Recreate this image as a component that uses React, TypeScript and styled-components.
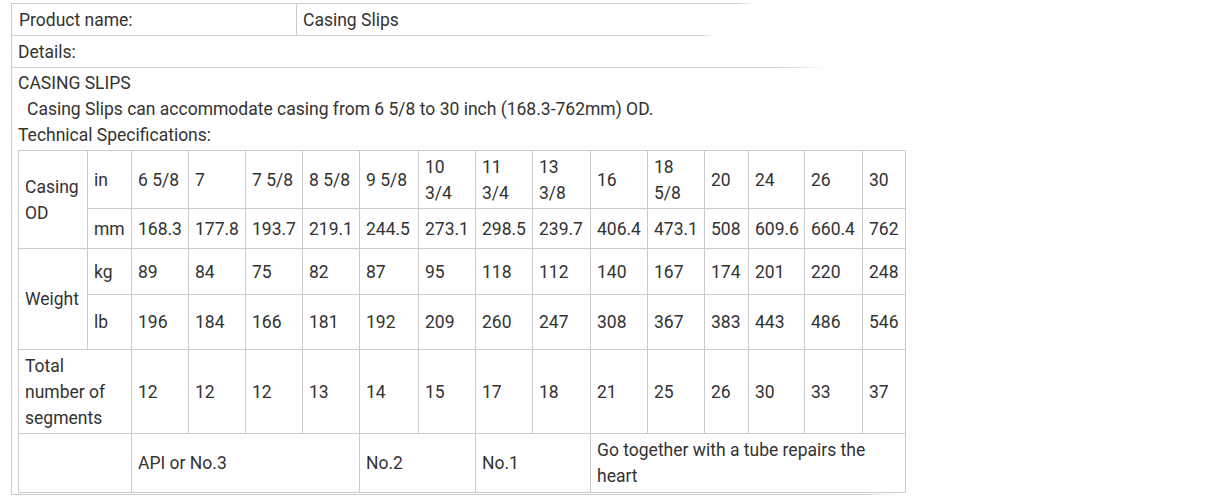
import React from "react";
import styled, { createGlobalStyle } from "styled-components";

const Global = createGlobalStyle`
  html, body { margin: 0; padding: 0; background: #fff; }
  body {
    font-family: Roboto, "Liberation Sans", Arial, sans-serif;
    font-size: 17.5px;
    color: #333;
  }
`;

const LINE = "#cccccc";

const Page = styled.div`
  padding: 3px 0 0 11px;
`;

const Frame = styled.div`
  display: flex;
  flex-direction: column;
  width: 900px;
  border-left: 1px solid ${LINE};
`;

const Rule = styled.div<{ $w: number; $fade?: number }>`
  height: 1px;
  width: ${(p) => p.$w}px;
  background: linear-gradient(
    to right,
    ${LINE} 0,
    ${LINE} calc(100% - ${(p) => p.$fade ?? 30}px),
    rgba(204, 204, 204, 0) 100%
  );
`;

const InfoRow = styled.div<{ $split?: boolean }>`
  display: grid;
  grid-template-columns: ${(p) => (p.$split ? "285px 1fr" : "1fr")};
  height: 31px;
`;

const InfoCell = styled.div<{ $divider?: boolean }>`
  display: flex;
  align-items: center;
  padding-left: ${(p) => (p.$divider ? 7 : 6)}px;
  border-right: ${(p) => (p.$divider ? `1px solid ${LINE}` : "none")};
  line-height: 20px;
  white-space: nowrap;
`;

const Content = styled.div`
  padding: 2px 0 1px 6px;
  display: flex;
  flex-direction: column;
`;

const TextLine = styled.div<{ $indent?: boolean }>`
  line-height: 26px;
  padding-left: ${(p) => (p.$indent ? 9 : 0)}px;
  white-space: nowrap;
`;

const SpecGrid = styled.div`
  margin-top: 2px;
  display: grid;
  grid-template-columns: 68px 43px 56px 56px 56px 56px 58px 56px 56px 57px 56px 56px 43px 55px 57px 42px;
  grid-template-rows: 57px 39px 45px 54px 83px 58px;
  gap: 1px;
  padding: 1px;
  background: ${LINE};
  width: max-content;
`;

const Cell = styled.div<{ $col?: string; $row?: string }>`
  background: #fff;
  display: flex;
  align-items: center;
  padding: 0 3px 0 6px;
  line-height: 26px;
  grid-column: ${(p) => p.$col ?? "auto"};
  grid-row: ${(p) => p.$row ?? "auto"};
`;

const inches = ["6 5/8", "7", "7 5/8", "8 5/8", "9 5/8", "10 3/4", "11 3/4", "13 3/8", "16", "18 5/8", "20", "24", "26", "30"];
const mm = ["168.3", "177.8", "193.7", "219.1", "244.5", "273.1", "298.5", "239.7", "406.4", "473.1", "508", "609.6", "660.4", "762"];
const kg = ["89", "84", "75", "82", "87", "95", "118", "112", "140", "167", "174", "201", "220", "248"];
const lb = ["196", "184", "166", "181", "192", "209", "260", "247", "308", "367", "383", "443", "486", "546"];
const segments = ["12", "12", "12", "13", "14", "15", "17", "18", "21", "25", "26", "30", "33", "37"];

const groups = [
  { label: "API or No.3", col: "3 / 7" },
  { label: "No.2", col: "7 / 9" },
  { label: "No.1", col: "9 / 11" },
  { label: "Go together with a tube repairs the heart", col: "11 / 17" },
];

export default function App() {
  return (
    <>
      <Global />
      <Page>
        <Frame>
          <Rule $w={743} $fade={20} />
          <InfoRow $split>
            <InfoCell $divider>Product name:</InfoCell>
            <InfoCell>Casing Slips</InfoCell>
          </InfoRow>
          <Rule $w={703} $fade={14} />
          <InfoRow>
            <InfoCell>Details:</InfoCell>
          </InfoRow>
          <Rule $w={818} $fade={60} />
          <Content>
            <TextLine>CASING SLIPS</TextLine>
            <TextLine $indent>
              Casing Slips can accommodate casing from 6 5/8 to 30 inch (168.3-762mm) OD.
            </TextLine>
            <TextLine>Technical Specifications:</TextLine>
            <SpecGrid>
              <Cell $col="1" $row="1 / 3">Casing OD</Cell>
              <Cell $col="2" $row="1">in</Cell>
              {inches.map((v, i) => (
                <Cell key={"in" + i} $row="1">{v}</Cell>
              ))}
              <Cell $col="2" $row="2">mm</Cell>
              {mm.map((v, i) => (
                <Cell key={"mm" + i} $row="2">{v}</Cell>
              ))}
              <Cell $col="1" $row="3 / 5">Weight</Cell>
              <Cell $col="2" $row="3">kg</Cell>
              {kg.map((v, i) => (
                <Cell key={"kg" + i} $row="3">{v}</Cell>
              ))}
              <Cell $col="2" $row="4">lb</Cell>
              {lb.map((v, i) => (
                <Cell key={"lb" + i} $row="4">{v}</Cell>
              ))}
              <Cell $col="1 / 3" $row="5">Total number of segments</Cell>
              {segments.map((v, i) => (
                <Cell key={"sg" + i} $row="5">{v}</Cell>
              ))}
              <Cell $col="1 / 3" $row="6" />
              {groups.map((g) => (
                <Cell key={g.label} $col={g.col} $row="6">{g.label}</Cell>
              ))}
            </SpecGrid>
          </Content>
          <Rule $w={889} $fade={40} />
        </Frame>
      </Page>
    </>
  );
}
